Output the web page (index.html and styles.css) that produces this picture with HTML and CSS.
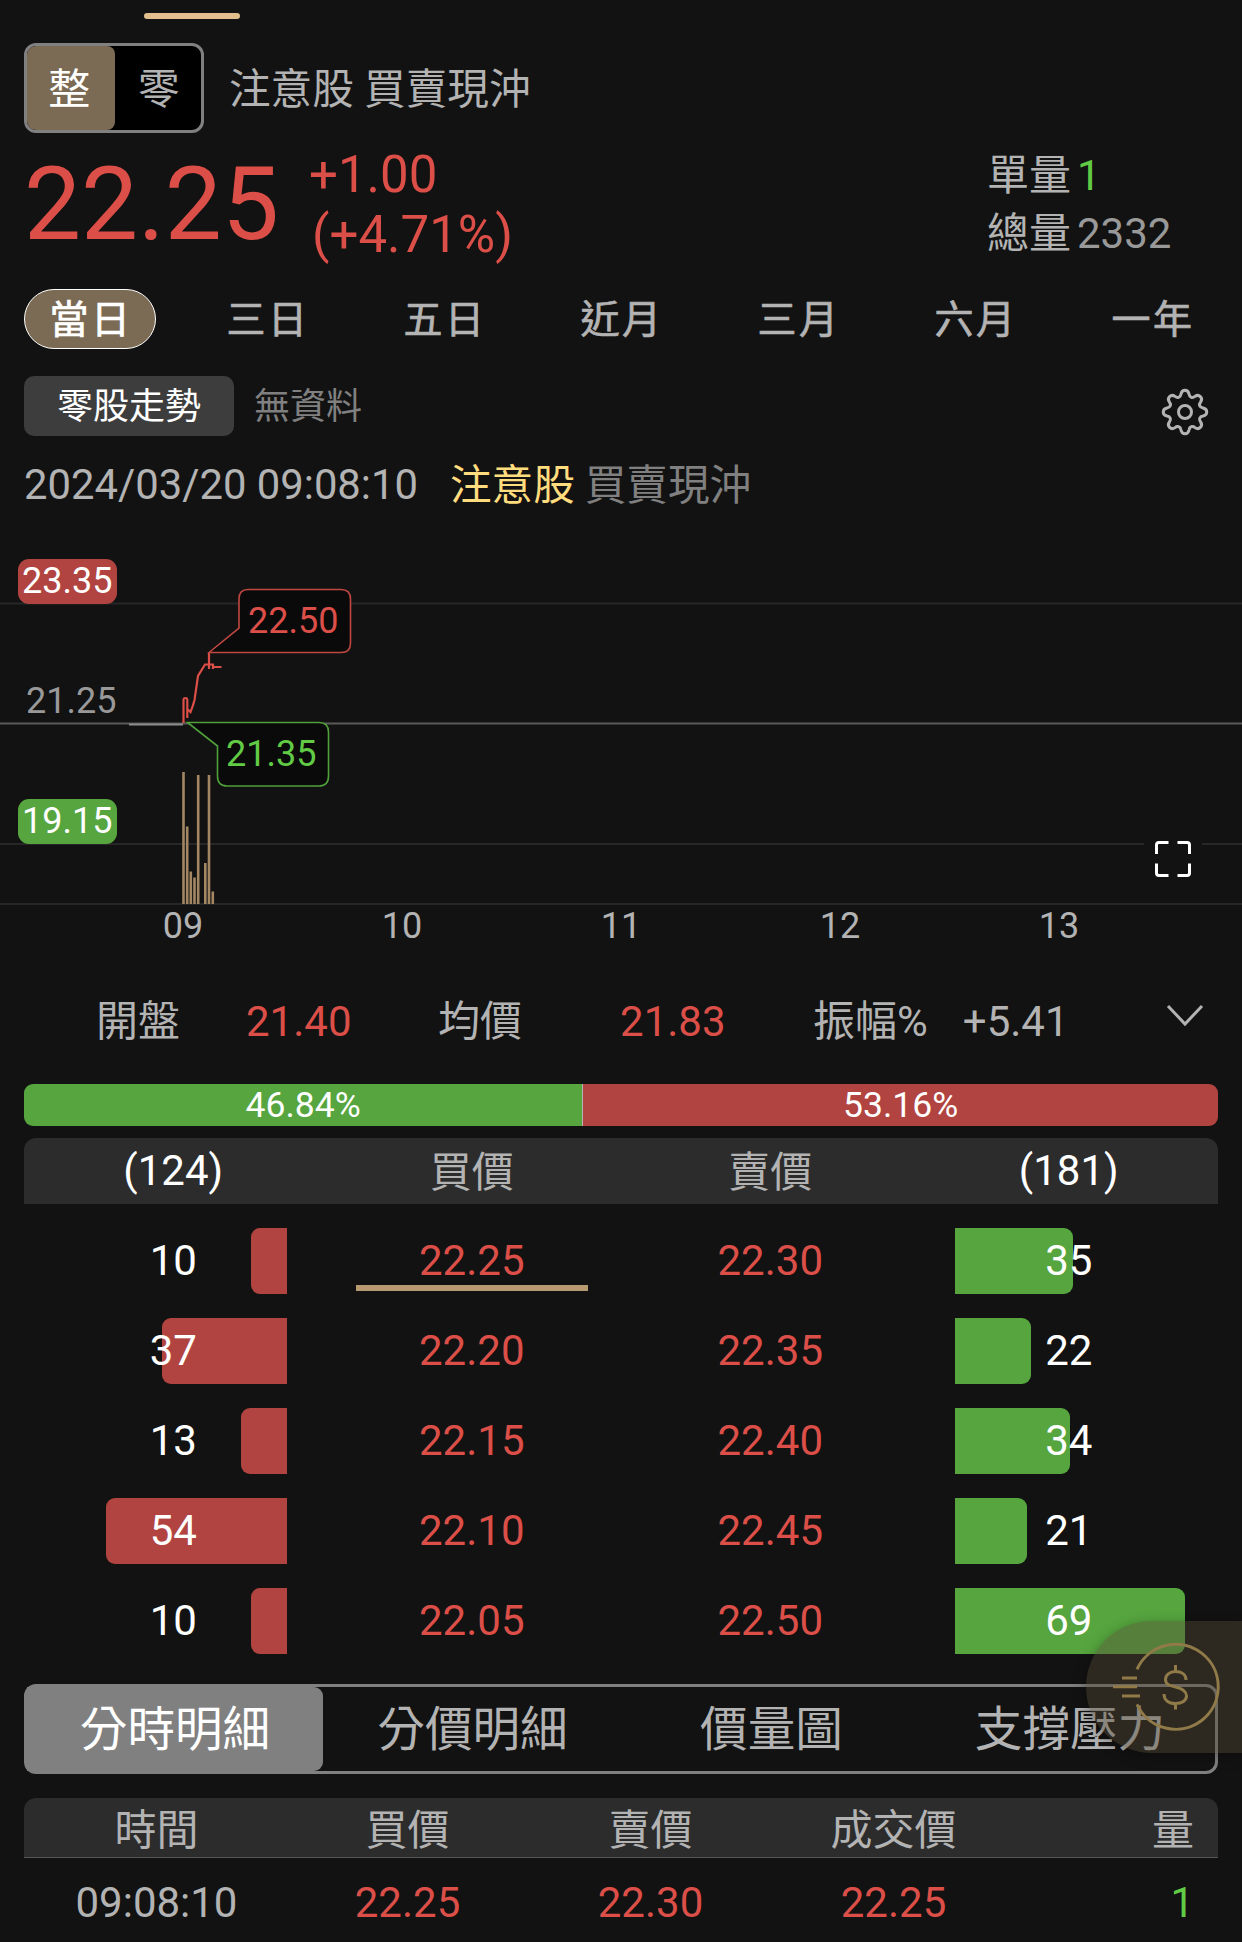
FILE: index.html
```html
<!DOCTYPE html>
<html lang="zh-Hant">
<head>
    <meta charset="UTF-8">
    <meta name="viewport" content="width=device-width, initial-scale=1.0">
    <title>個股走勢</title>
    <link rel="stylesheet" href="styles.css">
</head>
<body>
    <div class="tab-indicator"></div>

    <div class="lot-row">
        <div class="lot-toggle">
            <span class="active">整</span>
            <span>零</span>
        </div>
        <span class="lot-note">注意股 買賣現沖</span>
    </div>

    <div class="quote">
        <div class="price">22.25</div>
        <div class="change">
            <div>+1.00</div>
            <div class="percent">(+4.71%)</div>
        </div>
        <div class="volume">
            <div>單量<span class="green">1</span></div>
            <div>總量<span class="total">2332</span></div>
        </div>
    </div>

    <div class="periods">
        <span class="active">當日</span>
        <span>三日</span>
        <span>五日</span>
        <span>近月</span>
        <span>三月</span>
        <span>六月</span>
        <span>一年</span>
    </div>

    <div class="odd-lot">
        <span class="odd-button">零股走勢</span>
        <span class="odd-empty">無資料</span>
        <svg class="gear" viewBox="-24 -24 48 48">
            <path d="M-4 -18C-3 -23 3 -23 4 -18C4.600 -14.500 7.500 -13.500 10 -15.600C14 -18.500 18.500 -14 15.600 -10C13.500 -7.500 14.500 -4.600 18 -4C23 -3 23 3 18 4C14.500 4.600 13.500 7.500 15.600 10C18.500 14 14 18.500 10 15.600C7.500 13.500 4.600 14.500 4 18C3 23 -3 23 -4 18C-4.600 14.500 -7.500 13.500 -10 15.600C-14 18.500 -18.500 14 -15.600 10C-13.500 7.500 -14.500 4.600 -18 4C-23 3 -23 -3 -18 -4C-14.500 -4.600 -13.500 -7.500 -15.600 -10C-18.500 -14 -14 -18.500 -10 -15.600C-7.500 -13.500 -4.600 -14.500 -4 -18Z"/>
            <circle r="6.500"/>
        </svg>
    </div>

    <div class="stamp">
        <span class="time">2024/03/20 09:08:10</span>
        <span class="warn">注意股</span>
        <span class="dim">買賣現沖</span>
    </div>

    <!-- intraday chart -->
    <svg class="chart" viewBox="0 540 1242 420">
        <g class="grid">
            <path d="M0 603.500H1242M0 844H1144M1202 844H1242M0 904H1242"/>
        </g>
        <path class="base" d="M0 723.500H1242"/>
        <path class="flat" d="M129 724.500H183"/>
        <g class="bars">
            <path d="M183.500 772V904M187.200 826.500V904M190.800 871.500V904M194.500 877.500V904M198.200 775V904M205.300 863V904M209 775V904M212.800 891.500V904"/>
        </g>
        <path class="line" d="M183.500 723V700Q183.500 698 185.500 698Q187.300 698 187.300 700V718M187.300 709L190.500 712Q193 706 194.500 700L198 676L205 664.500H213V669M209 653V669M213 667H221.500"/>
        <path class="tip red-line" d="M209 652.500L239 628V599Q239 589.500 248 589.500H341Q350.500 589.500 350.500 599V643Q350.500 652.500 341 652.500Z"/>
        <path class="tip green-line" d="M187.500 722.500H319Q328.500 722.500 328.500 732V776Q328.500 786 319 786H227Q217.500 786 217.500 776V746Z"/>
        <text class="red" x="248" y="632.500">22.50</text>
        <text class="green" x="226" y="765.500">21.35</text>
        <rect class="up" x="18" y="559" width="99" height="45" rx="11"/>
        <rect class="down" x="18" y="799" width="99" height="45" rx="11"/>
        <text class="white" x="22" y="593">23.35</text>
        <text class="gray" x="26" y="713">21.25</text>
        <text class="white" x="22" y="833">19.15</text>
        <g class="axis">
            <text x="183" y="938">09</text>
            <text x="402" y="938">10</text>
            <text x="621" y="938">11</text>
            <text x="840" y="938">12</text>
            <text x="1059" y="938">13</text>
        </g>
        <path class="expand" d="M1156.500 854V845Q1156.500 842.500 1159 842.500H1168.500M1177.500 842.500H1187Q1189.500 842.500 1189.500 845V854M1189.500 863.500V873Q1189.500 875.500 1187 875.500H1177.500M1168.500 875.500H1159Q1156.500 875.500 1156.500 873V863.500"/>
    </svg>

    <div class="stats">
        <span class="s-name">開盤</span>
        <span class="s-open red">21.40</span>
        <span class="s-name">均價</span>
        <span class="s-avg red">21.83</span>
        <span class="s-name">振幅%</span>
        <span class="s-amp">+5.41</span>
        <svg class="chevron" viewBox="0 0 38 24"><path d="M2 2L19 20L36 2"/></svg>
    </div>

    <div class="ratio">
        <div class="ratio-buy" style="width: 46.84%">46.84%</div>
        <div class="ratio-sell">53.16%</div>
    </div>

    <div class="book">
        <div class="book-row book-head">
            <span class="white">(124)</span><span class="book-name">買價</span><span class="book-name">賣價</span><span class="white">(181)</span>
        </div>
        <div class="book-row">
            <span class="buy"><i style="width: 36px"></i><b>10</b></span><span class="best">22.25</span><span>22.30</span><span class="sell"><i style="width: 118px"></i><b>35</b></span>
        </div>
        <div class="book-row">
            <span class="buy"><i style="width: 125px"></i><b>37</b></span><span>22.20</span><span>22.35</span><span class="sell"><i style="width: 76px"></i><b>22</b></span>
        </div>
        <div class="book-row">
            <span class="buy"><i style="width: 46px"></i><b>13</b></span><span>22.15</span><span>22.40</span><span class="sell"><i style="width: 115px"></i><b>34</b></span>
        </div>
        <div class="book-row">
            <span class="buy"><i style="width: 181px"></i><b>54</b></span><span>22.10</span><span>22.45</span><span class="sell"><i style="width: 72px"></i><b>21</b></span>
        </div>
        <div class="book-row">
            <span class="buy"><i style="width: 36px"></i><b>10</b></span><span>22.05</span><span>22.50</span><span class="sell"><i style="width: 230px"></i><b>69</b></span>
        </div>
    </div>

    <div class="detail-tabs">
        <span class="active">分時明細</span>
        <span>分價明細</span>
        <span>價量圖</span>
        <span>支撐壓力</span>
    </div>

    <div class="ticks">
        <div class="tick-row tick-head">
            <span>時間</span><span>買價</span><span>賣價</span><span>成交價</span><span>量</span>
        </div>
        <div class="tick-row">
            <span>09:08:10</span><span class="red">22.25</span><span class="red">22.30</span><span class="red">22.25</span><span class="green">1</span>
        </div>
    </div>

    <!-- floating order button -->
    <div class="order-button">
        <svg viewBox="0 0 156 132">
            <path d="M51 48.300A42.500 42.500 0 1 1 51 83.300"/>
            <path d="M36 57H51M27 65.700H51M36 75H54"/>
            <path d="M100 59C100 53.500 95.500 50.500 89.500 50.500C83.500 50.500 79.500 54 79.500 58.500C79.500 63 83 64.500 89.500 66C97 67.700 100.500 70.500 100.500 75C100.500 79.500 96 82.500 89.500 82.500C82.500 82.500 78 79 78 73M89.500 44V50M89.500 83V88.500"/>
        </svg>
    </div>
</body>
</html>
```
FILE: styles.css
```css
* {
    box-sizing: border-box;
}

body {
    margin: 0;
    height: 1942px;
    overflow: hidden;
    position: relative;
    background-color: #121212;
    color: #b3b3b3;
    font-family: Roboto, "Noto Sans CJK TC", sans-serif;
    font-size: 42px;
    line-height: 60px;
}

.red { color: #db4f48; }
.green { color: #62cb46; }
.white { color: #ffffff; }

.tab-indicator {
    width: 96px;
    height: 6px;
    margin: 13px 0 0 144px;
    border-radius: 3px;
    background-color: #e2be8e;
}

.lot-row {
    display: flex;
    align-items: center;
    gap: 25px;
    height: 90px;
    margin: 24px 24px 0;
}

.lot-note {
    padding-top: 3px;
    font-size: 41.6px;
}

.lot-toggle {
    display: flex;
    width: 180px;
    height: 90px;
    border: 3px solid #808080;
    border-radius: 12px;
    background-color: #000000;
    overflow: hidden;
}

.lot-toggle span {
    flex: 1;
    padding-left: 2px;
    line-height: 87px;
    text-align: center;
}

.lot-toggle .active {
    padding: 0 3px 0 0;
    background-color: #7b6a54;
    border-radius: 8px;
    color: #ffffff;
}

/* price header */
.quote {
    display: flex;
    height: 156px;
    padding: 0 24px;
}

.price {
    width: 285px;
    padding-top: 12px;
    font-size: 101.5px;
    line-height: 120px;
    color: #db4f48;
}

.change {
    padding-top: 12px;
    font-size: 51px;
    color: #db4f48;
}

.percent {
    padding-left: 3px;
}

.volume {
    width: 231px;
    margin-left: auto;
    padding-top: 14px;
    line-height: 58px;
}

.volume span {
    margin-left: 6px;
}

.volume .total {
    color: #999999;
}

.periods {
    display: flex;
    justify-content: space-between;
    padding: 0 24px;
}

.periods span {
    width: 132px;
    height: 60px;
    line-height: 62px;
    font-size: 39px;
    letter-spacing: 2.5px;
    text-indent: 2px;
    text-align: center;
    -webkit-text-stroke: 0.7px currentColor;
}

.periods .active {
    border: 1px solid #ffffff;
    border-radius: 30px;
    background-color: #7b6a54;
    color: #ffffff;
    line-height: 60px;
}

.odd-lot {
    display: flex;
    align-items: center;
    height: 60px;
    margin: 27px 24px 0;
    font-size: 36px;
    line-height: 62px;
}

.odd-button {
    width: 210px;
    height: 60px;
    border-radius: 10px;
    background-color: #3d3d3d;
    color: #ffffff;
    text-align: center;
}

.odd-empty {
    height: 60px;
    margin-left: 20px;
    color: #808080;
}

.gear {
    width: 48px;
    height: 48px;
    margin: 12px 9px 0 auto;
    fill: none;
    stroke: #b3b3b3;
    stroke-width: 3;
}

.stamp {
    display: flex;
    height: 60px;
    margin-top: 18px;
    padding-left: 24px;
    font-size: 41.6px;
    line-height: 64px;
}

.time {
    font-size: 41.8px;
    line-height: 62px;
}

.warn {
    margin-left: 32px;
    color: #ffdc7d;
}

.dim {
    margin-left: 10px;
    color: #808080;
}

/* chart */
.chart {
    display: block;
    width: 1242px;
    height: 420px;
    margin-top: 26px;
    fill: none;
    font-size: 36px;
}

.chart text { fill: #b3b3b3; }
.chart .red { fill: #db4f48; }
.chart .green { fill: #62cb46; }
.chart .white { fill: #ffffff; }
.chart .gray { fill: #999999; }
.grid { stroke: #272727; stroke-width: 2; }
.base { stroke: #5a5a5a; stroke-width: 2; }
.flat { stroke: #8c8c8c; stroke-width: 2; }
.bars { stroke: #a38763; stroke-width: 2.6; }
.line { stroke: #db4f48; stroke-width: 2.2; }
.tip { fill: #0a0a0a; stroke-width: 1.6; }
.red-line { stroke: #c04741; }
.green-line { stroke: #4fa03a; }
.up { fill: #b14440; }
.down { fill: #56a53f; }
.axis { text-anchor: middle; }
.expand { stroke: #ffffff; stroke-width: 3; }

.stats {
    display: flex;
    align-items: center;
    height: 60px;
    margin-top: 32px;
    padding-left: 96px;
    line-height: 62px;
}

.s-name { line-height: 64px; }
.s-open { width: 192px; margin-left: 66px; }
.s-avg { width: 193px; margin-left: 98px; }
.s-amp { margin-left: 35px; }

.chevron {
    width: 38px;
    height: 24px;
    margin: -13px 38px 0 auto;
    fill: none;
    stroke: #b3b3b3;
    stroke-width: 3;
}

.ratio {
    display: flex;
    height: 42px;
    margin: 32px 24px 0;
    border-radius: 9px;
    overflow: hidden;
    font-size: 35.5px;
    line-height: 43px;
    color: #ffffff;
    text-align: center;
}

.ratio-buy {
    border-right: 1px solid #b3b3b3;
    background-color: #56a53f;
}

.ratio-sell {
    flex: 1;
    background-color: #b14440;
}

/* best five prices */
.book {
    margin: 12px 24px 0;
}

.book-row {
    display: grid;
    grid-template-columns: repeat(4, 1fr);
    height: 66px;
    margin-top: 24px;
    line-height: 66px;
    text-align: center;
    color: #db4f48;
}

.book-head {
    margin-top: 0;
    border-radius: 12px 12px 0 0;
    background-color: #2c2c2c;
    color: #b3b3b3;
}

.book-name {
    line-height: 69px;
}

.buy, .sell {
    display: grid;
    color: #ffffff;
}

.buy i, .buy b, .sell i, .sell b {
    grid-area: 1 / 1;
    font-weight: normal;
}

.buy i {
    justify-self: end;
    margin-right: 36px;
    border-radius: 9px 0 0 9px;
    background-color: #b14440;
}

.sell i {
    margin-left: 35px;
    border-radius: 0 9px 9px 0;
    background-color: #56a53f;
}

.best {
    width: 232px;
    justify-self: center;
    background: linear-gradient(#b89a70, #b89a70) 0 57px / 100% 6px no-repeat;
}

.detail-tabs {
    display: grid;
    grid-template-columns: 296px 299px 299px 1fr;
    height: 90px;
    margin: 30px 24px 0;
    border: 3px solid #808080;
    border-radius: 12px;
    font-size: 47.6px;
}

.detail-tabs span {
    height: 84px;
    line-height: 86px;
    text-align: center;
}

.detail-tabs span:last-child {
    padding-left: 4px;
}

.detail-tabs .active {
    border-radius: 0 9px 9px 0;
    background-color: #808080;
    color: #ffffff;
}

.ticks {
    margin: 24px 24px 0;
}

.tick-row {
    display: grid;
    grid-template-columns: 259px 243px 243px 243px 1fr;
    height: 90px;
    padding: 0 24px 0 3px;
    line-height: 90px;
    text-align: center;
}

.tick-row span:last-child {
    text-align: right;
}

.tick-head {
    height: 60px;
    border-bottom: 1px solid #555555;
    border-radius: 12px 12px 0 0;
    background-color: #2c2c2c;
    line-height: 66px;
}

.order-button {
    position: absolute;
    top: 1621px;
    right: 0;
    width: 156px;
    height: 132px;
    border-radius: 66px 0 0 66px;
    background-color: rgba(84, 75, 54, 0.42);
    box-shadow: 0 3px 14px rgba(0, 0, 0, 0.3);
}

.order-button svg {
    display: block;
    fill: none;
    stroke: #8f7a48;
    stroke-width: 3;
}
```
